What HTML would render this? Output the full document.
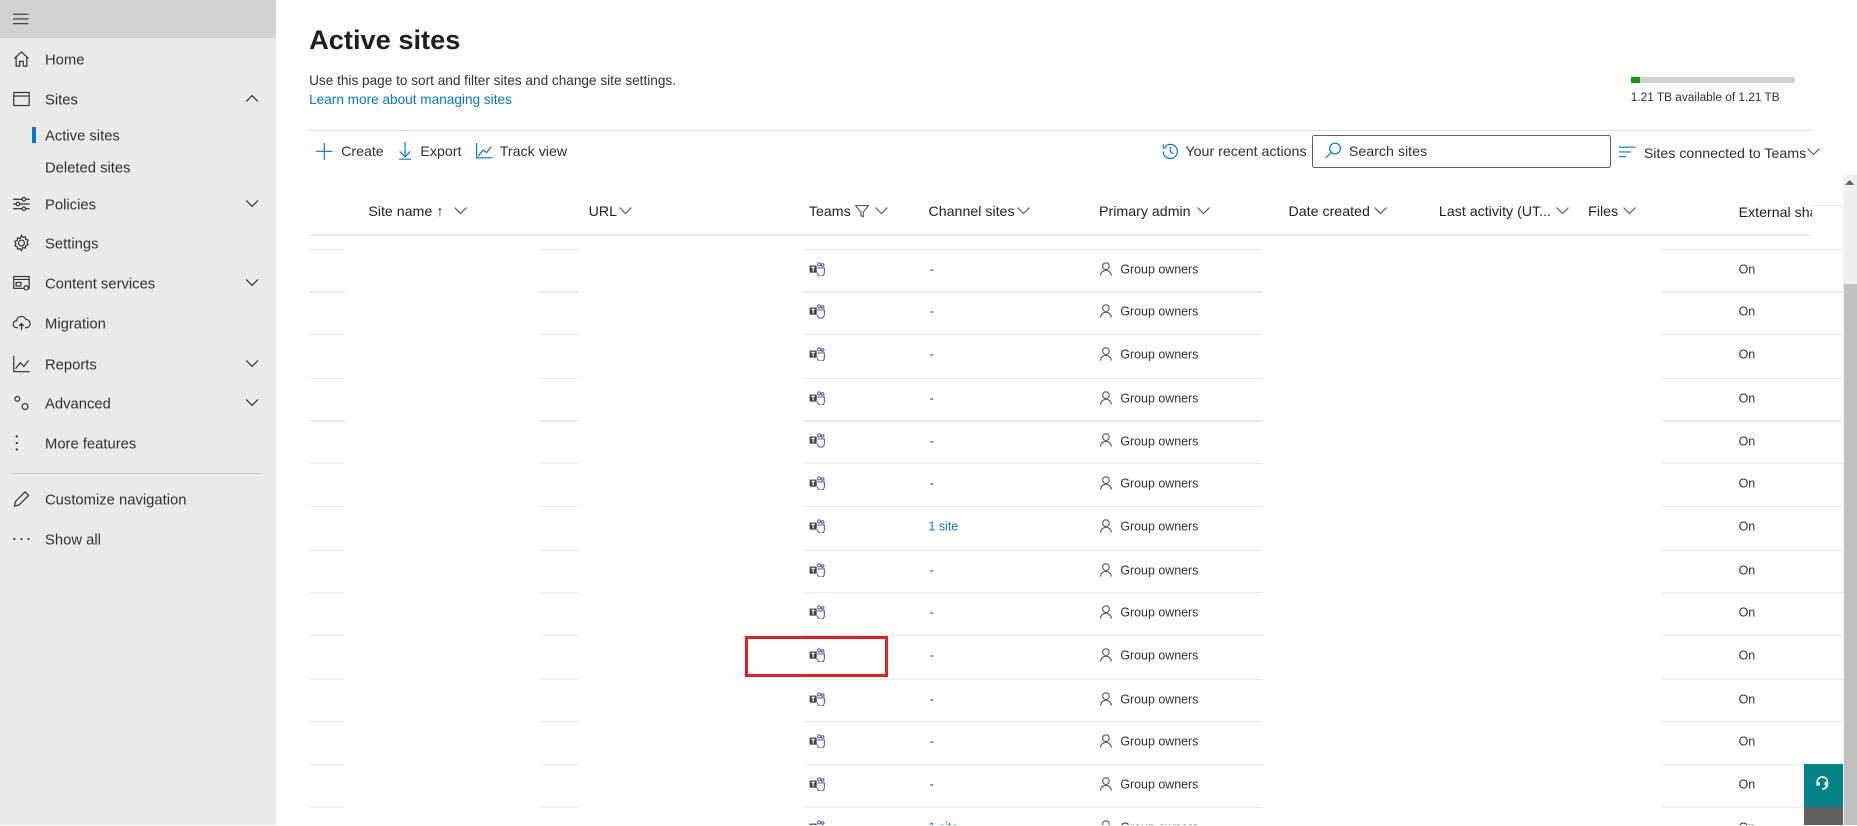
<!DOCTYPE html>
<html><head><meta charset="utf-8">
<style>
html,body{margin:0;padding:0;background:#fff;overflow:hidden;width:1857px;height:826px}
#w{zoom:1.18431;position:relative;width:1568px;height:697px;font-family:"Liberation Sans",sans-serif;color:#323130;overflow:hidden}
.a{position:absolute;white-space:nowrap}
#side{position:absolute;left:0;top:0;width:233px;height:697px;background:#eaeaea}
#top{position:absolute;left:0;top:0;width:233px;height:32px;background:#d2d2d2}
.nav{position:absolute;left:38px;font-size:12.5px;color:#323130;transform:translateY(-40%)}
.ic{position:absolute;left:10px;transform:translateY(-50%)}
.chev{position:absolute;left:207px;transform:translateY(-50%)}
.hd{position:absolute;top:179px;transform:translateY(-50%);font-size:12px;color:#201f1e}
.cell{position:absolute;font-size:10.5px;transform:translateY(-45%);color:#323130}
.sep{position:absolute;height:1px;background:#edebe9}
</style></head><body><div id="w">
<div id="side"></div>
<div id="top"></div>
<svg class="a" style="left:11px;top:11px" width="14" height="10"><path d="M0 1h13M0 5h13M0 9h13" stroke="#323130" stroke-width="1"/></svg>

<svg class="ic" style="top:50px" width="16" height="16" viewBox="0 0 16 16" fill="none" stroke="#323130"><path d="M2 7.5L8 2l6 5.5M3.5 6v8h3v-4h3v4h3V6"/></svg>
<div class="nav" style="top:50px">Home</div>
<svg class="ic" style="top:84px" width="16" height="16" viewBox="0 0 16 16" fill="none" stroke="#323130"><rect x="1.5" y="2.5" width="13" height="11"/><path d="M1.5 5.5h13"/></svg>
<div class="nav" style="top:84px">Sites</div>
<svg class="chev" style="top:83px" width="12" height="8"><path d="M1 7l5-5 5 5" stroke="#323130" fill="none"/></svg>
<div class="a" style="left:27px;top:107px;width:3px;height:14px;background:#0078d4"></div>
<div class="nav" style="top:114px">Active sites</div>
<div class="nav" style="top:141px">Deleted sites</div>
<svg class="ic" style="top:172px" width="16" height="16" viewBox="0 0 16 16" fill="none" stroke="#323130"><path d="M1 4h14M1 8h14M1 12h14"/><circle cx="10" cy="4" r="1.5" fill="#eaeaea"/><circle cx="5" cy="8" r="1.5" fill="#eaeaea"/><circle cx="10" cy="12" r="1.5" fill="#eaeaea"/></svg>
<div class="nav" style="top:172px">Policies</div>
<svg class="chev" style="top:172px" width="12" height="8"><path d="M1 1l5 5 5-5" stroke="#323130" fill="none"/></svg>
<svg class="ic" style="top:205px" width="16" height="16" viewBox="0 0 16 16" fill="none" stroke="#323130"><circle cx="8" cy="8" r="2.5"/><path d="M8 1.5l1.2 1.8 2.1-.6.3 2.1 2 .8-.9 1.9.9 1.9-2 .8-.3 2.1-2.1-.6L8 14.5l-1.2-1.8-2.1.6-.3-2.1-2-.8.9-1.9-.9-1.9 2-.8.3-2.1 2.1.6z"/></svg>
<div class="nav" style="top:205px">Settings</div>
<svg class="ic" style="top:239px" width="16" height="16" viewBox="0 0 16 16" fill="none" stroke="#323130"><rect x="1.5" y="2.5" width="13" height="10"/><path d="M1.5 5h13M3.5 7.5h4v3h-4z"/><circle cx="12" cy="12" r="1.8" fill="#eaeaea"/></svg>
<div class="nav" style="top:239px">Content services</div>
<svg class="chev" style="top:239px" width="12" height="8"><path d="M1 1l5 5 5-5" stroke="#323130" fill="none"/></svg>
<svg class="ic" style="top:273px" width="16" height="16" viewBox="0 0 16 16" fill="none" stroke="#323130"><path d="M5 12H4a3 3 0 010-6 4 4 0 017.7-1A3 3 0 0112 12h-1M8 14V8.5M6 10.5l2-2 2 2"/></svg>
<div class="nav" style="top:273px">Migration</div>
<svg class="ic" style="top:307px" width="16" height="16" viewBox="0 0 16 16" fill="none" stroke="#323130"><path d="M1.5 1v13.5H15M3 12l4-5 3 3 4-5"/></svg>
<div class="nav" style="top:307px">Reports</div>
<svg class="chev" style="top:307px" width="12" height="8"><path d="M1 1l5 5 5-5" stroke="#323130" fill="none"/></svg>
<svg class="ic" style="top:340px" width="16" height="16" viewBox="0 0 16 16" fill="none" stroke="#323130"><circle cx="4.5" cy="4.5" r="2"/><circle cx="11" cy="11" r="2.5"/></svg>
<div class="nav" style="top:340px">Advanced</div>
<svg class="chev" style="top:340px" width="12" height="8"><path d="M1 1l5 5 5-5" stroke="#323130" fill="none"/></svg>
<svg class="ic" style="top:374px" width="16" height="16" viewBox="0 0 16 16"><circle cx="4" cy="2.5" r="1" fill="#323130"/><circle cx="4" cy="8" r="1" fill="#323130"/><circle cx="4" cy="13.5" r="1" fill="#323130"/></svg>
<div class="nav" style="top:374px">More features</div>
<div class="a" style="left:10px;top:399px;width:210px;height:1px;background:#c8c6c4"></div>
<svg class="ic" style="top:421px" width="16" height="16" viewBox="0 0 16 16" fill="none" stroke="#323130"><path d="M2 14l1-4 8-8 3 3-8 8z"/></svg>
<div class="nav" style="top:421px">Customize navigation</div>
<svg class="ic" style="top:455px" width="16" height="16" viewBox="0 0 16 16"><circle cx="2" cy="8" r="0.9" fill="#323130"/><circle cx="8" cy="8" r="0.9" fill="#323130"/><circle cx="14" cy="8" r="0.9" fill="#323130"/></svg>
<div class="nav" style="top:455px">Show all</div>

<div class="a" style="left:261px;top:20px;font-size:23px;font-weight:bold;color:#201f1e">Active sites</div>
<div class="a" style="left:261px;top:62px;font-size:11.5px">Use this page to sort and filter sites and change site settings.</div>
<div class="a" style="left:261px;top:78px;font-size:11.5px;color:#0078d4">Learn more about managing sites</div>
<div class="a" style="left:1377px;top:65px;width:139px;height:5px;background:#d2d2d2"></div>
<div class="a" style="left:1377px;top:65px;width:8px;height:5px;background:#0c9c0c"></div>
<div class="a" style="left:1377px;top:76px;font-size:10px">1.21 TB available of 1.21 TB</div>
<div class="a" style="left:261px;top:110px;width:1268px;height:1px;background:#e1dfdd"></div>

<svg class="a" style="left:267px;top:121px" width="14" height="14"><path d="M7 0v14M0 7h14" stroke="#0078d4"/></svg>
<div class="a" style="left:288px;top:122px;font-size:12px">Create</div>
<svg class="a" style="left:336px;top:120px" width="12" height="15"><path d="M6 0v12M1.5 8l4.5 4.5L10.5 8M1 14.5h10" stroke="#0078d4" fill="none"/></svg>
<div class="a" style="left:355px;top:122px;font-size:12px">Export</div>
<svg class="a" style="left:402px;top:121px" width="14" height="13"><path d="M.5 0v12.5H14M2 11l4-5 3 2 4-5" stroke="#0078d4" fill="none"/></svg>
<div class="a" style="left:422px;top:122px;font-size:12px">Track view</div>

<svg class="a" style="left:981px;top:120px" width="14" height="15" viewBox="0 0 14 15" fill="none" stroke="#0078d4"><path d="M2.5 4A6 6 0 111 8M1 2v3h3M7 4v4l2.5 2"/></svg>
<div class="a" style="left:1001px;top:122px;font-size:12px">Your recent actions</div>
<div class="a" style="left:1108px;top:114px;width:251px;height:26px;border:1px solid #605e5c;border-radius:2px"></div>
<svg class="a" style="left:1119px;top:120px" width="14" height="14" fill="none" stroke="#0078d4"><circle cx="8.5" cy="5.5" r="4.5"/><path d="M5.5 8.5L.5 13.5"/></svg>
<div class="a" style="left:1139px;top:122px;font-size:12px">Search sites</div>
<svg class="a" style="left:1367px;top:123px" width="14" height="11"><path d="M0 1h14M0 5h10M0 9h6" stroke="#0078d4"/></svg>
<div class="a" style="left:1388px;top:123px;font-size:12px">Sites connected to Teams</div>
<svg class="a" style="left:1526px;top:125px" width="11" height="7"><path d="M.5.5l5 5 5-5" stroke="#605e5c" fill="none"/></svg>

<div class="a" style="left:1556px;top:148px;width:12px;height:549px;background:#f0f0f0"></div>
<div class="a" style="left:1557px;top:240px;width:11px;height:457px;background:#c1c1c1"></div>
<svg class="a" style="left:1558px;top:151px" width="8" height="6"><path d="M0 5L4 1l4 4z" fill="#606060"/></svg>

<div class="hd" style="left:311px">Site name ↑</div>
<svg class="a" style="left:383px;top:175px" width="11" height="7"><path d="M.5.5l5 5 5-5" stroke="#605e5c" fill="none"/></svg>
<div class="hd" style="left:497px">URL</div>
<svg class="a" style="left:523px;top:175px" width="11" height="7"><path d="M.5.5l5 5 5-5" stroke="#605e5c" fill="none"/></svg>
<div class="hd" style="left:683px">Teams</div>
<svg class="a" style="left:722px;top:173px" width="12" height="11"><path d="M.5.5h11L7 6v4L5 9V6z" stroke="#605e5c" fill="none"/></svg>
<svg class="a" style="left:739px;top:175px" width="11" height="7"><path d="M.5.5l5 5 5-5" stroke="#605e5c" fill="none"/></svg>
<div class="hd" style="left:784px">Channel sites</div>
<svg class="a" style="left:859px;top:175px" width="11" height="7"><path d="M.5.5l5 5 5-5" stroke="#605e5c" fill="none"/></svg>
<div class="hd" style="left:928px">Primary admin</div>
<svg class="a" style="left:1011px;top:175px" width="11" height="7"><path d="M.5.5l5 5 5-5" stroke="#605e5c" fill="none"/></svg>
<div class="hd" style="left:1088px">Date created</div>
<svg class="a" style="left:1160px;top:175px" width="11" height="7"><path d="M.5.5l5 5 5-5" stroke="#605e5c" fill="none"/></svg>
<div class="hd" style="left:1215px">Last activity (UT...</div>
<svg class="a" style="left:1314px;top:175px" width="11" height="7"><path d="M.5.5l5 5 5-5" stroke="#605e5c" fill="none"/></svg>
<div class="hd" style="left:1341px">Files</div>
<svg class="a" style="left:1370px;top:175px" width="11" height="7"><path d="M.5.5l5 5 5-5" stroke="#605e5c" fill="none"/></svg>
<div class="a" style="left:1468px;top:173px;width:62px;overflow:hidden;font-size:12px;color:#201f1e">External sharing</div>
<div class="a" style="left:261px;top:198px;width:1268px;height:1px;background:#edebe9"></div>
<div class="a" style="left:1530px;top:173px;width:26px;height:1px;background:#edebe9"></div>

<div id="rows"></div>
<script>
var ys=[227,263,299,336,372,408,444,481,517,553,590,626,662,698];
var h='';
for(var i=0;i<ys.length;i++){
 var y=ys[i], s=y-17;
 h+='<div class="sep" style="left:261px;width:30px;top:'+s+'px"></div><div class="sep" style="left:456px;width:33px;top:'+s+'px"></div><div class="sep" style="left:679px;width:387px;top:'+s+'px"></div><div class="sep" style="left:1403px;width:153px;top:'+s+'px"></div>';
 h+='<svg class="a" style="left:683px;top:'+(y-6)+'px" width="14" height="12" viewBox="0 0 14 12"><rect x="0.5" y="3" width="6" height="6" fill="#444"/><path d="M2 4.5h3M3.5 4.5v3.5" stroke="#fff"/><circle cx="8.5" cy="2" r="1.3" fill="none" stroke="#6264a7"/><circle cx="11.5" cy="2.5" r="1.1" fill="none" stroke="#6264a7"/><path d="M7 5h6v4a3 3 0 01-6 0" fill="none" stroke="#6264a7"/></svg>';
 if(i==6||i==13) h+='<div class="cell" style="left:784px;top:'+y+'px;color:#0078d4">1 site</div>';
 else h+='<div class="cell" style="left:785px;top:'+y+'px">-</div>';
 h+='<svg class="a" style="left:929px;top:'+(y-6)+'px" width="10" height="12" viewBox="0 0 10 12" fill="none" stroke="#605e5c"><circle cx="5" cy="3.5" r="2.8"/><path d="M.5 11.5a4.5 4.5 0 019 0"/></svg>';
 h+='<div class="cell" style="left:946px;top:'+y+'px">Group owners</div>';
 h+='<div class="cell" style="left:1468px;top:'+y+'px">On</div>';
}
document.getElementById('rows').innerHTML=h;
</script>
<div class="a" style="left:629px;top:537px;width:116px;height:30px;border:3px solid #e81c24"></div>
<div class="a" style="left:1523px;top:645px;width:33px;height:36px;background:#038387"></div>
<svg class="a" style="left:1532px;top:654px" width="14" height="14" viewBox="0 0 14 14"><path d="M7 1a5 5 0 00-5 5v3h3V6H3.3a3.7 3.7 0 017.4 0H9v3h1.5l-2 2H7v1.5h2l3-3V6A5 5 0 007 1z" fill="#fff"/></svg>
<div class="a" style="left:1523px;top:681px;width:33px;height:16px;background:#616161"></div>
</div></body></html>
